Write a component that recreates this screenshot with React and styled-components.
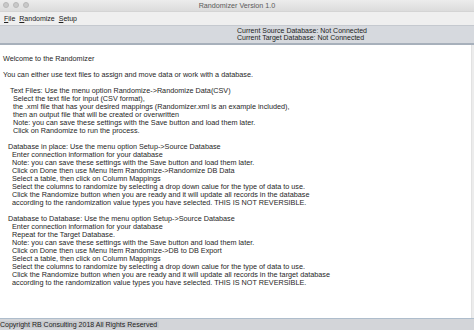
import * as React from 'react';
import styled, { createGlobalStyle } from 'styled-components';

const GlobalStyle = createGlobalStyle`
  html, body {
    margin: 0;
    padding: 0;
    background: #ffffff;
  }
  body {
    font-family: "Liberation Sans", Arial, sans-serif;
  }
`

const Window = styled.div`
  width: 474px;
  height: 330px;
  display: flex;
  flex-direction: column;
  overflow: hidden;
  background: #fff;
`
const TitleBar = styled.div`
  height: 11px;
  position: relative;
  display: flex;
  align-items: center;
  justify-content: center;
  background: linear-gradient(#ececec, #dcdcdc);
  color: #5a5a5a;
  font-size: 7.2px;
`
const Lights = styled.div`
  position: absolute;
  left: 3px;
  top: 2px;
  display: flex;
  gap: 4px;
`
const Light = styled.span`
  width: 6px;
  height: 6px;
  border-radius: 50%;
  background: #c9c9c9;
  border: 0.5px solid #b8b8b8;
  box-sizing: border-box;
`
const MenuBar = styled.div`
  height: 13px;
  display: flex;
  align-items: center;
  gap: 4px;
  padding-left: 4px;
  background: #efefef;
  border-top: 1px solid #d4d4d4;
  font-size: 7px;
  color: #222;
`
const MenuItem = styled.span`
  & u {
    text-decoration: underline;
  }
`
const StatusPanel = styled.div`
  height: 17px;
  display: flex;
  flex-direction: column;
  justify-content: center;
  padding-left: 237px;
  background: #d6d9de;
  border-top: 1px solid #c5c9cf;
  border-bottom: 2px solid #a7b0bb;
  font-size: 7px;
  line-height: 6.5px;
  color: #1c1c1c;
`
const Body = styled.div`
  flex: 1;
  display: flex;
  background: #fff;
`
const TextArea = styled.div`
  flex: 1;
  padding: 10px 0 0 3px;
  font-size: 7.25px;
  line-height: 8px;
  color: #262626;
`
const Gutter = styled.div`
  width: 2px;
  background: #ececec;
  border-left: 1px solid #e2e2e2;
`
const Line = styled.div`
  padding-left: ${props => props.indent || 0}px;
  min-height: 8px;
  white-space: nowrap;
`
const Footer = styled.div`
  height: 11px;
  display: flex;
  align-items: center;
  background: #d3d5d9;
  border-top: 1px solid #aebdcc;
  font-size: 7px;
  color: #1c1c1c;
`
const FooterLabel = styled.span`
  background: #c9cbcf;
  padding-right: 2px;
`

const lines = [
  ['Welcome to the Randomizer', 0],
  ['', 0],
  ['You can either use text files to assign and move data or work with a database.', 0],
  ['', 0],
  ['Text Files: Use the menu option Randomize->Randomize Data(CSV)', 7],
  ['Select the text file for input (CSV format),', 10],
  ['the .xml file that has your desired mappings (Randomizer.xml is an example included),', 10],
  ['then an output file that will be created or overwritten', 10],
  ['Note: you can save these settings with the Save button and load them later.', 10],
  ['Click on Randomize to run the process.', 10],
  ['', 0],
  ['Database in place: Use the menu option Setup->Source Database', 5],
  ['Enter connection information for your database', 9],
  ['Note: you can save these settings with the Save button and load them later.', 9],
  ['Click on Done then use Menu Item Randomize->Randomize DB Data', 9],
  ['Select a table, then click on Column Mappings', 9],
  ['Select the columns to randomize by selecting a drop down calue for the type of data to use.', 9],
  ['Click the Randomize button when you are ready and it will update all records in the database', 9],
  ['according to the randomization value types you have selected. THIS IS NOT REVERSIBLE.', 9],
  ['', 0],
  ['Database to Database: Use the menu option Setup->Source Database', 5],
  ['Enter connection information for your database', 9],
  ['Repeat for the Target Database.', 9],
  ['Note: you can save these settings with the Save button and load them later.', 9],
  ['Click on Done then use Menu Item Randomize->DB to DB Export', 9],
  ['Select a table, then click on Column Mappings', 9],
  ['Select the columns to randomize by selecting a drop down calue for the type of data to use.', 9],
  ['Click the Randomize button when you are ready and it will update all records in the target database', 9],
  ['according to the randomization value types you have selected. THIS IS NOT REVERSIBLE.', 9],
]

const App = () => {
  return (
    <Window>
      <GlobalStyle />
      <TitleBar>
        <Lights>
          <Light />
          <Light />
          <Light />
        </Lights>
        Randomizer Version 1.0
      </TitleBar>
      <MenuBar>
        <MenuItem><u>F</u>ile</MenuItem>
        <MenuItem><u>R</u>andomize</MenuItem>
        <MenuItem><u>S</u>etup</MenuItem>
      </MenuBar>
      <StatusPanel>
        <div>Current Source Database: Not Connected</div>
        <div>Current Target Database: Not Connected</div>
      </StatusPanel>
      <Body>
        <TextArea>
          {lines.map((line, i) => (
            <Line indent={line[1]} key={i}>{line[0]}</Line>
          ))}
        </TextArea>
        <Gutter />
      </Body>
      <Footer>
        <FooterLabel>Copyright RB Consulting 2018 All Rights Reserved</FooterLabel>
      </Footer>
    </Window>
  )
}

export default App
